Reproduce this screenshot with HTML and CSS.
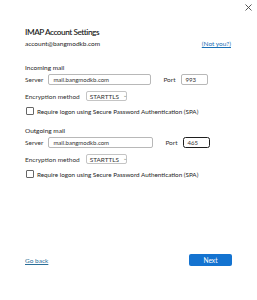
FILE: index.html
```html
<!DOCTYPE html>
<html>
<head>
<meta charset="utf-8">
<link rel="stylesheet" href="styles.css">
</head>
<body>
<div class="dialog">
  <div class="topbar">
    <button class="close" aria-label="Close">
      <svg width="7" height="7" viewBox="0 0 7 7"><path d="M0.5 0.5L6.5 6.5M6.5 0.5L0.5 6.5" stroke="#444" stroke-width="0.9" fill="none"/></svg>
    </button>
  </div>
  <div class="content">
    <h1 class="title">IMAP Account Settings</h1>
    <div class="account-row">
      <span>account@bangmodkb.com</span>
      <a class="link" href="#">(Not you?)</a>
    </div>

    <section class="group first">
      <div class="group-title">Incoming mail</div>
      <div class="row server-row">
        <span class="lbl">Server</span>
        <span class="input server">mail.bangmodkb.com</span>
        <span class="lbl port-lbl">Port</span>
        <span class="input port">993</span>
      </div>
      <div class="row enc-row">
        <span class="lbl">Encryption method</span>
        <span class="select">STARTTLS <span class="chev">&#8964;</span></span>
      </div>
      <div class="row check-row">
        <span class="checkbox"></span>
        <span class="check-label">Require logon using Secure Password Authentication (SPA)</span>
      </div>
    </section>

    <section class="group second">
      <div class="group-title">Outgoing mail</div>
      <div class="row server-row">
        <span class="lbl">Server</span>
        <span class="input server wide">mail.bangmodkb.com</span>
        <span class="lbl port-lbl">Port</span>
        <span class="input port focused">465</span>
      </div>
      <div class="row enc-row">
        <span class="lbl">Encryption method</span>
        <span class="select">STARTTLS <span class="chev">&#8964;</span></span>
      </div>
      <div class="row check-row">
        <span class="checkbox"></span>
        <span class="check-label">Require logon using Secure Password Authentication (SPA)</span>
      </div>
    </section>
  </div>
  <div class="footer">
    <a class="back" href="#">Go back</a>
    <button class="next">Next</button>
  </div>
</div>
</body>
</html>
```

FILE: styles.css
```css
html, body {
  margin: 0;
  padding: 0;
  background: #ffffff;
}
body {
  font-family: Lato, "Noto Sans", sans-serif;
  color: #242424;
  font-size: 6.5px;
}
.dialog {
  width: 257px;
  height: 300px;
  display: flex;
  flex-direction: column;
}
.topbar {
  height: 13px;
  display: flex;
  justify-content: flex-end;
  align-items: center;
  padding-right: 5px;
}
.close {
  border: none;
  background: none;
  padding: 0;
  width: 7px;
  height: 7px;
  display: flex;
  margin-top: 1px;
}
.content {
  padding: 0 26px 0 25px;
}
.title {
  margin: 13px 0 0 0;
  font-size: 8.2px;
  font-weight: 600;
  letter-spacing: -0.45px;
  line-height: 12px;
  color: #1f1f1f;
}
.account-row {
  display: flex;
  justify-content: space-between;
  align-items: center;
  margin-top: 1px;
  line-height: 9px;
  font-size: 6.5px;
}
.link {
  color: #1a6fb5;
  text-decoration: underline;
  font-size: 6.5px;
}
.group.first {
  margin-top: 14.5px;
}
.group.second {
  margin-top: 9.5px;
}
.group-title {
  line-height: 9px;
}
.row {
  display: flex;
  align-items: center;
}
.server-row {
  height: 12px;
  margin-top: 2px;
}
.lbl {
  color: #333;
}
.input {
  height: 10.5px;
  box-sizing: border-box;
  border: 0.8px solid #b8b8b8;
  border-radius: 2px;
  display: flex;
  align-items: center;
  padding-left: 4px;
  font-size: 6px;
  color: #333;
}
.server {
  margin-left: 5px;
  width: 103px;
}
.server.wide {
  width: 105px;
}
.port-lbl {
  margin-left: 12px;
}
.port {
  margin-left: 5px;
  width: 27px;
}
.port.focused {
  border: 1px solid #1f1f1f;
  border-radius: 2.5px;
}
.enc-row {
  height: 12px;
  margin-top: 4.5px;
}
.select {
  margin-left: 6px;
  height: 10px;
  box-sizing: border-box;
  width: 41px;
  border: 0.8px solid #c4c4c4;
  border-radius: 2px;
  display: flex;
  align-items: center;
  padding-left: 3px;
  font-size: 6.4px;
  color: #333;
}
.chev {
  margin-left: 4px;
  font-size: 5px;
  color: #666;
  line-height: 1;
  position: relative;
  top: -1px;
}
.check-row {
  height: 10px;
  margin-top: 4px;
}
.check-label {
  font-size: 6.3px;
}
.checkbox {
  width: 6px;
  height: 6px;
  border: 0.8px solid #666;
  border-radius: 1px;
  margin-right: 3.5px;
  margin-left: 0.5px;
}
.footer {
  margin-top: auto;
  margin-bottom: 34px;
  padding: 0 25px 0 25px;
  display: flex;
  justify-content: space-between;
  align-items: center;
}
.back {
  color: #2b6e98;
  text-decoration: underline;
  font-size: 6.5px;
}
.next {
  width: 43px;
  height: 12px;
  background: #1473d0;
  color: #fff;
  border: none;
  border-radius: 2px;
  font-family: inherit;
  font-size: 6.6px;
  padding: 0;
}
```
